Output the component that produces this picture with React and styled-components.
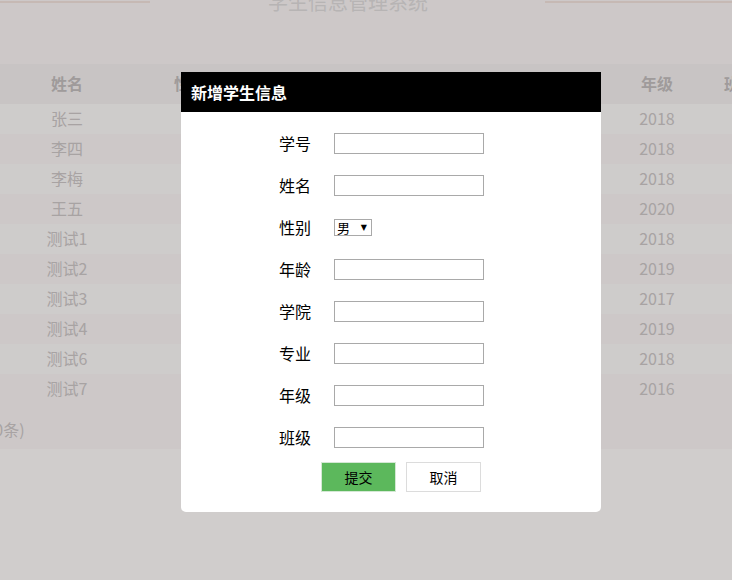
import React from "react"
import styled, { createGlobalStyle } from "styled-components"

const GlobalStyle = createGlobalStyle`
  html, body {
    margin: 0;
    padding: 0;
    overflow: hidden;
    background: #fefbf9;
    font-family: "Noto Sans CJK SC", "Noto Sans", sans-serif;
  }
`

const students = [
  { id: "1001", name: "张三", sex: "男", age: 20, college: "计算机学院", major: "软件工程", grade: 2018, cls: 1 },
  { id: "1002", name: "李四", sex: "男", age: 21, college: "计算机学院", major: "软件工程", grade: 2018, cls: 2 },
  { id: "1003", name: "李梅", sex: "女", age: 20, college: "外语学院", major: "英语", grade: 2018, cls: 1 },
  { id: "1004", name: "王五", sex: "男", age: 19, college: "理学院", major: "数学", grade: 2020, cls: 3 },
  { id: "1005", name: "测试1", sex: "男", age: 20, college: "测试学院", major: "测试", grade: 2018, cls: 1 },
  { id: "1006", name: "测试2", sex: "女", age: 20, college: "测试学院", major: "测试", grade: 2019, cls: 1 },
  { id: "1007", name: "测试3", sex: "男", age: 22, college: "测试学院", major: "测试", grade: 2017, cls: 2 },
  { id: "1008", name: "测试4", sex: "女", age: 20, college: "测试学院", major: "测试", grade: 2019, cls: 2 },
  { id: "1009", name: "测试6", sex: "男", age: 21, college: "测试学院", major: "测试", grade: 2018, cls: 3 },
  { id: "1010", name: "测试7", sex: "男", age: 23, college: "测试学院", major: "测试", grade: 2016, cls: 1 },
]

const columns = "110px 114px 132px 120px 120px 119px 84px 82px 150px"

const Page = styled.div`
  background: #faf5f5;
  height: 459px;
`

// the page is scrolled sideways, so the bar runs past both edges
const TitleBar = styled.div`
  display: flex;
  align-items: center;
  height: 24px;
  margin: -10px -63px 0 -100px;
`

const Line = styled.div`
  flex: 1;
  height: 2px;
  background: #f2e2dc;
`

const Title = styled.h1`
  margin: 0 117px 0 118px;
  font-size: 20px;
  line-height: 24px;
  font-weight: normal;
  color: #e0dcdc;
  white-space: nowrap;
`

const Table = styled.div`
  margin: 50px 0 0 -100px;
  width: 1031px;
`

const Row = styled.div`
  display: grid;
  grid-template-columns: ${columns};
  height: ${({ head }) => (head ? "40px" : "30px")};
  background: ${({ head, odd }) => (head ? "#f4f0f0" : odd ? "#fcf9f8" : "#faf5f5")};
`

const Cell = styled.div`
  display: flex;
  align-items: center;
  justify-content: center;
  padding-bottom: 2px;
  font-size: 16px;
  color: ${({ head }) => (head ? "#c3bdbd" : "#cdc7c7")};
  font-weight: ${({ head }) => (head ? "bold" : "normal")};
  white-space: nowrap;
`

const Footer = styled.div`
  padding: 15px 0 0 64px;
  font-size: 16px;
  line-height: 20px;
  color: #cdc7c7;
  white-space: nowrap;
`

const Mask = styled.div`
  position: fixed;
  inset: 0;
  background: rgba(0, 0, 0, 0.18);
`

const Dialog = styled.div`
  position: fixed;
  left: 181px;
  top: 72px;
  width: 420px;
  background: #fff;
  border-radius: 0 0 5px 5px;
  padding-bottom: 20px;
`

const DialogHead = styled.div`
  height: 40px;
  background: #000;
  color: #fff;
  font-size: 16px;
  font-weight: bold;
  line-height: 40px;
  padding-left: 10px;
`

const Form = styled.form`
  padding: 10px 0 0 98px;
`

const FieldRow = styled.div`
  display: flex;
  align-items: center;
  height: 42px;
`

const Label = styled.label`
  width: 55px;
  font-size: 16px;
  line-height: 20px;
  color: #000;
`

const Input = styled.input`
  display: block;
  box-sizing: border-box;
  width: 150px;
  height: 21px;
  border: 1px solid #a9a9a9;
  padding: 1px 2px;
  font-size: 14px;
  outline: none;
`

const SelectBox = styled.div`
  position: relative;
  width: 38px;
  height: 17px;
`

const Select = styled.select`
  display: block;
  appearance: none;
  box-sizing: border-box;
  width: 38px;
  height: 17px;
  border: 1px solid #a9a9a9;
  border-radius: 0;
  background: #fff;
  padding: 0 0 0 2px;
  font-family: "Noto Sans CJK SC", sans-serif;
  font-size: 13px;
  line-height: 15px;
  color: #000;
`

const Arrow = styled.span`
  position: absolute;
  right: 5px;
  top: 0;
  font-family: "DejaVu Sans", sans-serif;
  font-size: 8px;
  line-height: 17px;
  color: #000;
  pointer-events: none;
`

const Actions = styled.div`
  display: flex;
  gap: 10px;
  margin-top: 4px;
  padding-left: 42px;
`

const Button = styled.button`
  box-sizing: border-box;
  width: 75px;
  height: 30px;
  border: 1px solid ${({ primary }) => (primary ? "#d4e8d4" : "#dcdcdc")};
  background: ${({ primary }) => (primary ? "#5cb85c" : "#fff")};
  color: #000;
  font-family: "Noto Sans CJK SC", sans-serif;
  font-size: 14px;
  padding: 0;
  cursor: pointer;
`

const fields = [
  ["学号", "id"],
  ["姓名", "name"],
  ["性别", "sex"],
  ["年龄", "age"],
  ["学院", "college"],
  ["专业", "major"],
  ["年级", "grade"],
  ["班级", "cls"],
]

const heads = ["学号", "姓名", "性别", "年龄", "学院", "专业", "年级", "班级", "操作"]

export default function App() {
  return (
    <>
      <GlobalStyle />
      <Page>
        <TitleBar>
          <Line />
          <Title>学生信息管理系统</Title>
          <Line />
        </TitleBar>
        <Table>
          <Row head>
            {heads.map((h) => (
              <Cell head key={h}>{h}</Cell>
            ))}
          </Row>
          {students.map((s, i) => (
            <Row key={s.id} odd={i % 2 === 0}>
              <Cell>{s.id}</Cell>
              <Cell>{s.name}</Cell>
              <Cell>{s.sex}</Cell>
              <Cell>{s.age}</Cell>
              <Cell>{s.college}</Cell>
              <Cell>{s.major}</Cell>
              <Cell>{s.grade}</Cell>
              <Cell>{s.cls}</Cell>
              <Cell>修改 删除</Cell>
            </Row>
          ))}
          <Footer>(共10条)</Footer>
        </Table>
      </Page>
      <Mask />
      <Dialog>
        <DialogHead>新增学生信息</DialogHead>
        <Form onSubmit={(e) => e.preventDefault()}>
          {fields.map(([label, key]) => (
            <FieldRow key={key}>
              <Label>{label}</Label>
              {key === "sex" ? (
                <SelectBox>
                  <Select defaultValue="男">
                    <option>男</option>
                    <option>女</option>
                  </Select>
                  <Arrow>▼</Arrow>
                </SelectBox>
              ) : (
                <Input type="text" />
              )}
            </FieldRow>
          ))}
          <Actions>
            <Button primary type="submit">提交</Button>
            <Button type="button">取消</Button>
          </Actions>
        </Form>
      </Dialog>
    </>
  )
}
